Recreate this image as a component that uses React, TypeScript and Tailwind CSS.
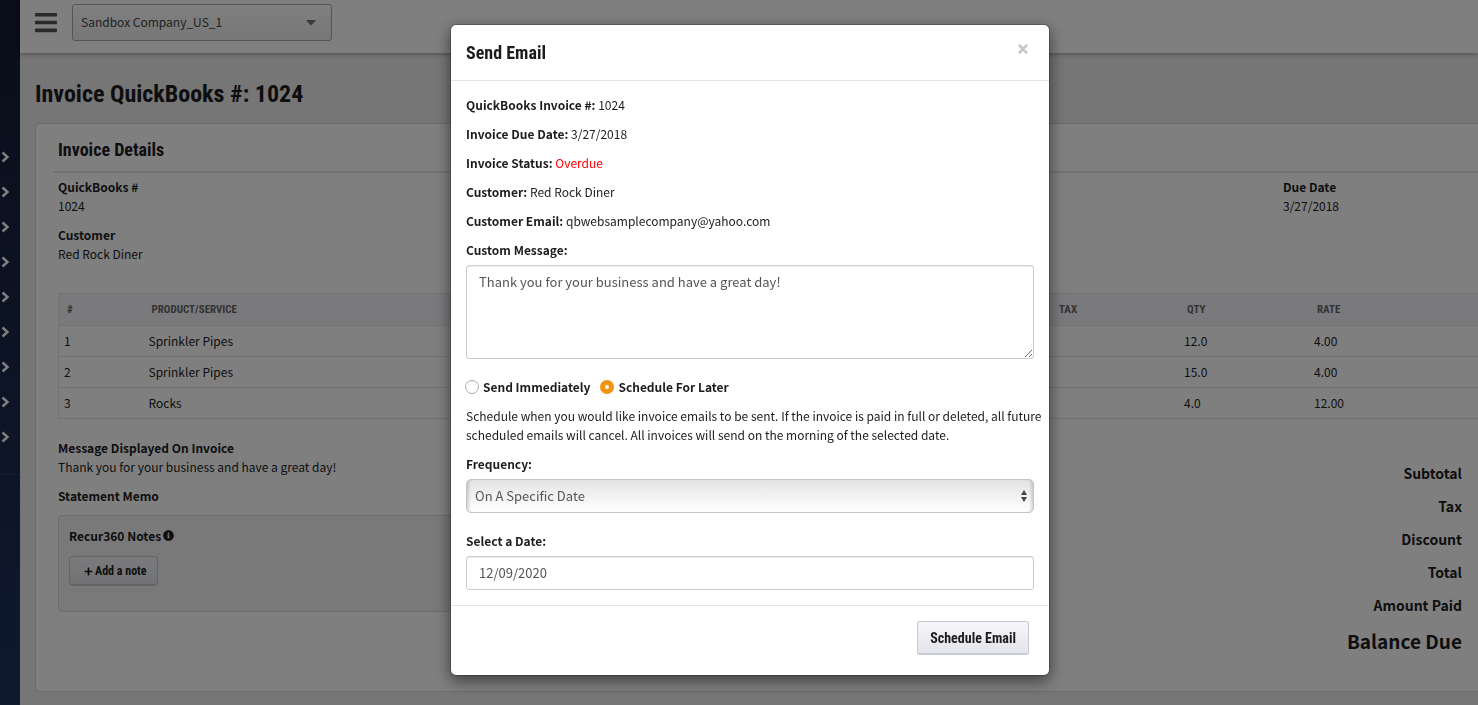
import { useState } from 'react';
import type { ReactNode } from 'react';
import { FaBars, FaCaretDown, FaInfoCircle, FaPlus } from 'react-icons/fa';

type LineItem = {
  id: number;
  product: string;
  tax: string;
  qty: string;
  rate: string;
};

const lineItems: LineItem[] = [
  { id: 1, product: 'Sprinkler Pipes', tax: '', qty: '12.0', rate: '4.00' },
  { id: 2, product: 'Sprinkler Pipes', tax: '', qty: '15.0', rate: '4.00' },
  { id: 3, product: 'Rocks', tax: '', qty: '4.0', rate: '12.00' },
];

const totals = ['Subtotal', 'Tax', 'Discount', 'Total', 'Amount Paid'];

const menuItems = [
  'Dashboard',
  'Customers',
  'Invoices',
  'Payments',
  'Schedules',
  'Emails',
  'Reports',
  'Settings',
  'Help',
];

const headingFont =
  "font-['Roboto_Condensed','Liberation_Sans_Narrow','Noto_Sans_CJK_SC',sans-serif] font-bold";

function Sidebar() {
  return (
    <nav className="flex w-5 shrink-0 flex-col bg-gradient-to-b from-[#141c34] to-[#1e335e]">
      <div className="border-b border-[#2c4068] pt-[139px] pb-5">
        {menuItems.map((item) => (
          <a key={item} href="#" aria-label={item} className="flex h-[35px] items-center">
            <svg viewBox="0 0 10 12" className="h-3 w-[10px]" fill="none">
              <path d="M2.5 1.5 7.5 6 2.5 10.5" stroke="#fff" strokeWidth="2.4" />
            </svg>
          </a>
        ))}
      </div>
    </nav>
  );
}

function TopBar() {
  return (
    <header className="relative flex h-[53px] items-start gap-[15px] bg-white px-[15px] pt-1 shadow-[0_1px_5px_rgba(0,0,0,0.35)]">
      <button type="button" aria-label="Toggle menu" className="pt-[5px]">
        <FaBars className="h-[27px] w-[22px] text-[#555]" />
      </button>
      <button
        type="button"
        className="flex h-[37px] w-[260px] items-center justify-between rounded-[3px] border border-[#aaa] bg-gradient-to-b from-white to-[#eee] pr-[15px] pb-[2px] pl-2 text-[#444]"
      >
        Sandbox Company_US_1
        <FaCaretDown className="h-4 w-[10px] text-[#777]" preserveAspectRatio="none" />
      </button>
    </header>
  );
}

function Field({ label, children }: { label: string; children?: ReactNode }) {
  return (
    <div className="mb-[10px]">
      <div className="font-bold">{label}</div>
      {children}
    </div>
  );
}

function ItemsTable() {
  return (
    <table className="mt-5 w-full table-fixed border-collapse border border-r-0 border-[#e4e4ea] text-left">
      <colgroup>
        <col className="w-[85px]" />
        <col />
        <col className="w-[128px]" />
        <col className="w-[130px]" />
        <col className="w-[169px]" />
      </colgroup>
      <thead>
        <tr className={`h-8 bg-[#f4f4f8] text-[11px] text-[#666] ${headingFont}`}>
          <th className="pl-2">#</th>
          <th className="pl-2">PRODUCT/SERVICE</th>
          <th className="pl-2">TAX</th>
          <th className="pl-2">QTY</th>
          <th className="pl-2">RATE</th>
        </tr>
      </thead>
      <tbody>
        {lineItems.map((item) => (
          <tr key={item.id} className="h-[31px] border-t border-[#e4e4ea]">
            <td className="pb-[2px] pl-[5px]">{item.id}</td>
            <td className="pb-[2px] pl-[5px]">{item.product}</td>
            <td className="pb-[2px] pl-[5px]">{item.tax}</td>
            <td className="pb-[2px] pl-[5px]">{item.qty}</td>
            <td className="pb-[2px] pl-[5px]">{item.rate}</td>
          </tr>
        ))}
      </tbody>
    </table>
  );
}

function InvoicePanel() {
  return (
    <section className="ml-[15px] rounded-l border border-r-0 border-[#d4d4d4] bg-white pb-[31px] pl-[17px]">
      <h2 className={`border-b-2 border-[#e4e4e4] pt-[15px] pb-[11px] pl-[5px] text-[18px] leading-[21px] ${headingFont}`}>
        Invoice Details
      </h2>
      <div className="pt-1 pl-[5px]">
        <div className="flex justify-between">
          <div>
            <Field label="QuickBooks #">1024</Field>
            <Field label="Customer">Red Rock Diner</Field>
          </div>
          <div className="w-[195px]">
            <Field label="Due Date">3/27/2018</Field>
          </div>
        </div>
        <ItemsTable />
        <div className="flex justify-between pt-[19px]">
          <div className="w-1/2">
            <Field label="Message Displayed On Invoice">
              Thank you for your business and have a great day!
            </Field>
            <Field label="Statement Memo" />
            <div className="h-[97px] rounded border border-[#d8d8d8] bg-[#f2f2f2] px-[10px] pt-[10px]">
              <div className="flex items-center gap-[2px] font-bold">
                Recur360 Notes <FaInfoCircle className="size-[11px]" />
              </div>
              <button
                type="button"
                className={`mt-[11px] flex h-[30px] items-center gap-[2px] rounded-sm border border-b-2 border-[#c8c9d0] bg-gradient-to-b from-[#f5f5fa] to-[#e4e5ea] pt-[2px] pr-[10px] pl-[14px] text-[12px] ${headingFont}`}
              >
                <FaPlus className="size-[9px]" /> Add a note
              </button>
            </div>
          </div>
          <div className="w-[220px] pt-[19px] pr-4 text-right text-[14px] leading-[33px] font-bold">
            {totals.map((label) => (
              <div key={label}>{label}</div>
            ))}
            <div className="text-[19px] leading-[38px]">Balance Due</div>
          </div>
        </div>
      </div>
    </section>
  );
}

function SendEmailModal() {
  const [message, setMessage] = useState('Thank you for your business and have a great day!');
  const [mode, setMode] = useState('later');
  const [date, setDate] = useState('12/09/2020');

  const details = [
    { label: 'QuickBooks Invoice #:', value: '1024' },
    { label: 'Invoice Due Date:', value: '3/27/2018' },
    { label: 'Invoice Status:', value: 'Overdue', overdue: true },
    { label: 'Customer:', value: 'Red Rock Diner' },
    { label: 'Customer Email:', value: 'qbwebsamplecompany@yahoo.com' },
  ];

  return (
    <div className="fixed inset-0 flex items-start justify-center overflow-hidden bg-black/50 pt-6 pl-[22px]">
      <div
        role="dialog"
        aria-labelledby="send-email-title"
        className="w-[600px] rounded-md border border-black/20 bg-white bg-clip-padding shadow-[0_5px_15px_rgba(0,0,0,0.5)]"
      >
        <div className="flex items-start justify-between border-b border-[#e5e5e5] p-[15px]">
          <h3 id="send-email-title" className={`text-[18px] leading-[25px] ${headingFont}`}>
            Send Email
          </h3>
          <button type="button" aria-label="Close" className="mt-1 mr-[6px]">
            <svg viewBox="0 0 10 10" className="size-[10px]" fill="none">
              <path d="M1.8 1.8 8.2 8.2M8.2 1.8 1.8 8.2" stroke="#c8c8c8" strokeWidth="2.9" strokeLinecap="round" />
            </svg>
          </button>
        </div>

        <div className="px-[15px] pt-[14px] pb-[15px]">
          {details.map((row) => (
            <p key={row.label} className="mb-[10px]">
              <b>{row.label}</b>{' '}
              <span className={row.overdue ? 'text-[#f00]' : ''}>{row.value}</span>
            </p>
          ))}

          <label htmlFor="message" className="mb-[6px] block font-bold">
            Custom Message:
          </label>
          <textarea
            id="message"
            value={message}
            onChange={(e) => setMessage(e.target.value)}
            className="block h-[94px] w-full resize rounded-[3px] border border-[#ccc] px-3 py-[6px] text-[13px] leading-5 text-[#555] shadow-[inset_0_1px_1px_rgba(0,0,0,0.075)] outline-none"
          />

          <div className="mt-[18px] mb-[10px] flex gap-[10px] font-bold">
            <label className="-ml-px flex items-center gap-1">
              <input
                type="radio"
                name="mode"
                checked={mode === 'now'}
                onChange={() => setMode('now')}
                className="size-[14px] appearance-none rounded-full border border-[#aaa] bg-white checked:border-[5px] checked:border-[#f0930f]"
              />
              Send Immediately
            </label>
            <label className="flex items-center gap-1">
              <input
                type="radio"
                name="mode"
                checked={mode === 'later'}
                onChange={() => setMode('later')}
                className="size-[14px] appearance-none rounded-full border border-[#aaa] bg-white checked:border-[5px] checked:border-[#f0930f]"
              />
              Schedule For Later
            </label>
          </div>

          <p className="-mr-3 mb-[10px]">
            Schedule when you would like invoice emails to be sent. If the invoice is paid in full or deleted, all future
            scheduled emails will cancel. All invoices will send on the morning of the selected date.
          </p>

          <label htmlFor="frequency" className="mb-[6px] block font-bold">
            Frequency:
          </label>
          <div className="relative mb-[18px]">
            <select
              id="frequency"
              className="block h-[34px] w-full appearance-none rounded-[5px] border border-[#c4c4c4] bg-gradient-to-b from-[#e4e4e4] to-white px-2 pb-[2px] text-[13px] text-[#555] shadow-[inset_4px_0_3px_-2px_rgba(0,0,0,0.15),inset_-4px_0_3px_-2px_rgba(0,0,0,0.15)] outline-none"
            >
              <option>On A Specific Date</option>
            </select>
            <svg viewBox="0 0 6 12" className="pointer-events-none absolute top-[11px] right-[7px] h-3 w-[6px]" fill="#444">
              <path d="M3 0 6 5H0zM3 12 0 7h6z" />
            </svg>
          </div>

          <label htmlFor="date" className="mb-[6px] block font-bold">
            Select a Date:
          </label>
          <input
            id="date"
            type="text"
            value={date}
            onChange={(e) => setDate(e.target.value)}
            className="block h-[34px] w-full rounded-[3px] border border-[#ccc] px-3 pb-[2px] text-[13px] text-[#555] shadow-[inset_0_1px_1px_rgba(0,0,0,0.075)] outline-none"
          />
        </div>

        <div className="flex justify-end border-t border-[#e5e5e5] px-5 pt-[15px] pb-5">
          <button
            type="button"
            className={`h-[34px] rounded-[3px] border border-b-2 border-[#c8c9d4] bg-gradient-to-b from-[#f5f5fa] to-[#e4e5ea] px-3 pt-[2px] text-[14px] ${headingFont}`}
          >
            Schedule Email
          </button>
        </div>
      </div>
    </div>
  );
}

export default function App() {
  return (
    <div className="flex min-h-screen bg-[#ececec] font-['Noto_Sans_CJK_SC',sans-serif] text-[12px] leading-[19px] text-[#1c1c1c]">
      <Sidebar />
      <main className="min-w-0 grow pb-3">
        <TopBar />
        <h1 className={`px-[15px] pt-[26px] pb-[13px] text-[24px] leading-[31px] ${headingFont}`}>
          Invoice QuickBooks #: 1024
        </h1>
        <InvoicePanel />
      </main>
      <SendEmailModal />
    </div>
  );
}
